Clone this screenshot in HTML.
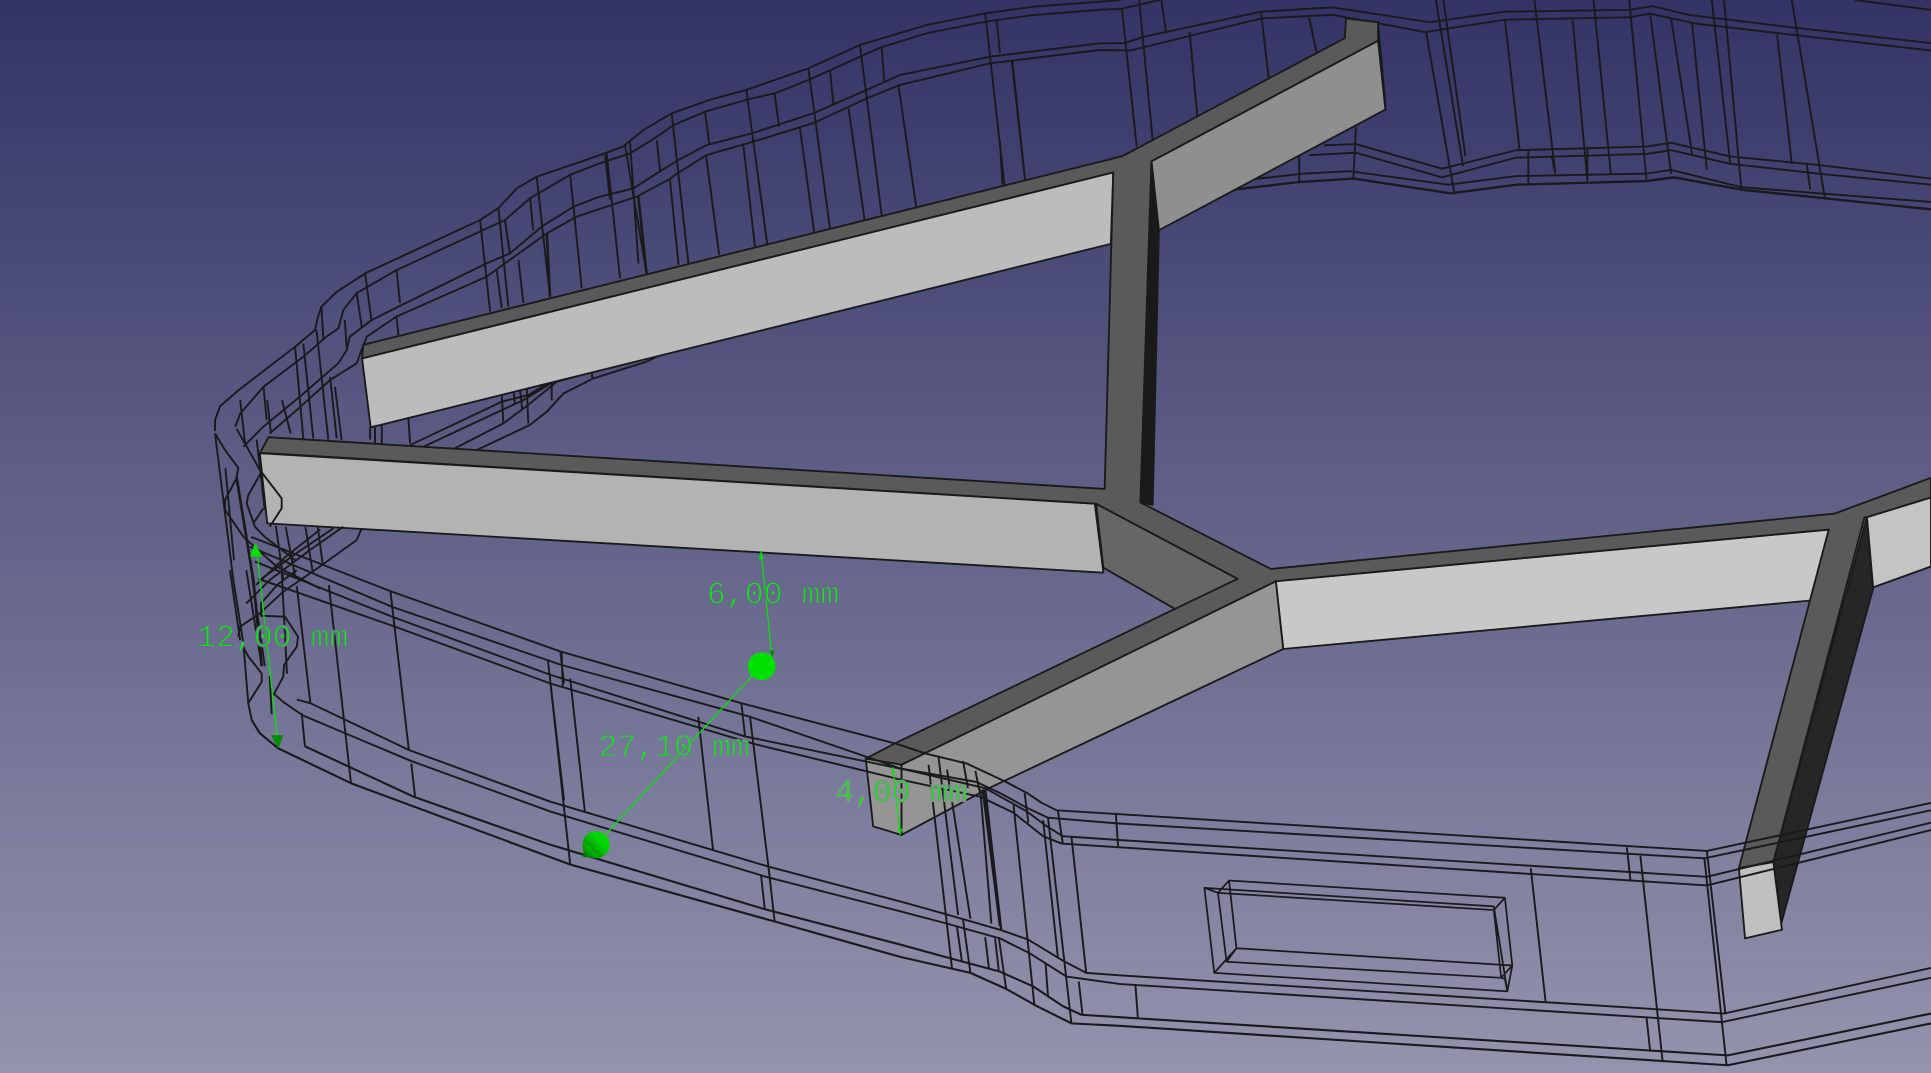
<!DOCTYPE html>
<html><head><meta charset="utf-8"><title>FreeCAD view</title>
<style>html,body{margin:0;padding:0;width:1931px;height:1073px;overflow:hidden;background:#555}svg{display:block}
text{font-family:"Liberation Mono",monospace;font-size:25.6px;fill:#00f400;stroke-width:.95px}</style></head>
<body>
<svg xmlns="http://www.w3.org/2000/svg" width="1931" height="1073" viewBox="0 0 1568 871.3">
<defs><linearGradient id="bg" x1="0" y1="0" x2="0" y2="1"><stop offset="0" stop-color="#333366"/><stop offset="1" stop-color="#9494ae"/></linearGradient>
<linearGradient id="s2" x1="0" y1="1" x2="1" y2="0"><stop offset=".05" stop-color="#006a00"/><stop offset=".6" stop-color="#00d000"/><stop offset="1" stop-color="#00e800"/></linearGradient></defs>
<rect width="1568" height="871.3" fill="url(#bg)"/>

<g fill="none" stroke="#1a1a1c" stroke-width="1.55" stroke-linejoin="round">
<!-- rear rim -->
<polyline points="174.6,350 174.6,341 178.6,330 193.5,317 239.6,281.6 255.8,268 258,258 261,249 273.4,237 296.4,222 389.8,178.7 404.7,169 419.6,153 435.8,143.5 487,126 506,119 522.4,105.6 545.4,92 576.5,81 606,73 656.4,55.5 698.3,36.5 752.5,20.3 800,10.8 839,5.4 893,1.4 910,0"/>
<polyline points="190.8,346.5 192,344 195,336 214,314 246.3,289.7 265,273.4 274.7,266.7 278.8,251.8 289.6,238 322,219.3 389.8,188 410,178.7 430.4,161 462.9,142 487,132.6 511.6,124.5 532,112 547,101.5 572.5,90.7 606,81 629,75.8 656.4,65 674,57 698.3,46 717,37.9 752.5,27 800,17.6 839,12.2 893,8 911,7 942,0"/>
<polyline points="197.6,362.8 213.8,346.5 243.6,322 274.7,295 281.5,284.3 284,273.4 301.8,259.9 323.5,249 395,213.9 414,205.8 439.9,184 465.6,167.9 487,159.7 514.3,153 533.2,140.8 550.8,130 573.8,117.8 610.4,108.3 660.4,92 703.8,73 730.8,60.9 803.9,46 893,35.2 913,35 928,30 1024,9.5 1082,6 1161,18 1222,9.5 1323,8 1342,5 1371,12 1453,22 1568,35"/>
<polyline points="219,352 240.9,333 268,308.6 289.6,295 293.7,284 297.8,273.4 322,257 395,224.7 444,189.5 468,176 517,159.7 542.7,146 552.2,139.4 573.8,125.9 611.7,115 660.4,100 703.8,79.9 730.8,69 803.9,51.4 893,40.6 918,41 1024,15 1082,12 1157,26 1222,16 1323,14 1340,11 1376,19 1453,28 1568,41"/>
<polyline points="1506,0 1568,8"/>
<polyline points="1075,118 1101,117 1171,137 1231,122 1337,119 1357,116 1405,127 1477,134 1568,145"/>
<polyline points="1063,126 1101,124 1171,144 1231,128 1337,125 1357,122 1405,133 1477,141 1568,150"/>
<polyline points="1014,146 1058,141 1096,139 1176,150 1231,143 1337,141 1357,138 1414,152 1477,157 1568,164"/>
<polyline points="1002,154 1053,148 1099,145 1178,157 1231,150 1337,147 1359,144 1414,154 1568,170" stroke-width="1.9"/>
<!-- rear verticals -->
<path d="M1158 26L1181 157M1166 0L1188 135M1172 0L1190 127M1222 16L1234 122M1246 0L1263 141M1277 16L1289 147M1294 0L1308 141M1323 0L1337 146M1340 12L1357 141M1357 15L1374 125M1374 19L1386 138M1390 0L1405 133M1400 0L1414 154M1443 28L1455 133M1455 0L1482 162M1467 133L1470 154M911 7L923 119M925 0L936 114M966 26L973 103M1024 10L1031 70M1063 14L1070 47M943 0L947 27M822 49L832 143M812 114L814 150M1101 103L1099 145M1055 127L1055 148M1241 122L1241 149M1289 120L1289 147M1260 127L1263 141"/>
<path d="M214 314L216.5 341M239.6 281.6L246.3 356M246.3 279L254.4 356M257 268L266.6 357M268 306L273.4 356M272 314L277.4 357.4M261 249L262.6 276M280 260L281.5 281.6M289.6 238L293.7 265M296.4 222L301.8 261M322 219L324.8 246M322 257L323.5 272M389.8 178.7L398 253M404.7 169L412.8 249M403.3 219L407.4 250M410 178.7L414 205.8M421 211L425 246M430.4 161L433 187M435.8 143.5L446.6 241M463 142L472.4 234M492.6 124.5L503.5 226M507.5 117.8L525 222M511.6 115L518.4 214M533.3 113.7L536 139.4M544 146L551 215M491.3 126L495.3 162M545.4 92L559 214M572.5 90.7L576 117.8M573.3 125.9L584 207M606 73L623 198M603.6 117.8L613 200M629 75.8L632.6 103M649.6 104L661 188M656.4 55.5L674 186M674 57L676.7 85M689 88L702 178M698.3 36.5L716 175M716 39L718 66M729.5 69L744 168M800 10.8L815.6 150M809.3 16L812 43M821.5 48.7L832.3 146"/>
<path d="M444 189L446.6 241M518.4 160L525 222" stroke-width="2.1"/>
<!-- rear lower, between arms -->
<polyline points="541.4,285.6 525,293.7 481.8,307.3 457.5,319.5 444,334.3 430.4,345 387,365.5"/>
<polyline points="527.9,289.7 481.8,301.9 452,310 430.4,327.6 408.7,343.8 369.5,364"/>
<polyline points="449.3,310 425,324.9 407.4,333 343.8,362.8"/>
<polyline points="446.6,310 429,320.8 407.4,326.2 333,361.4"/>
<path d="M300.5 346.5L300.5 357M304.5 347L304.5 361M310 345L310 360M331.6 339.7L333 360M407.4 319L408.7 344M417 315L418 328M422 314L424 332M427.7 314L429 344M448 311L448 325M480.5 302L481 307"/>
</g>

<!-- solids -->
<g stroke="#1a1a1a" stroke-width="1.5" stroke-linejoin="round">
<polygon points="935,131 1119,33 1125,89 941,187" fill="#8f8f8f"/>
<polygon points="1119,18 1125,85 1119,33" fill="#1a1a1a"/>
<polygon points="294,291 904,140 902,198 301,347" fill="#bcbcbc"/>
<polygon points="935,131 941,187 936,410 926,408" fill="#1a1a1a"/>
<polygon points="211,368 889,409 896,465 217,425" fill="#b3b3b3"/>
<polygon points="1036,472 1485,430 1477,487 1042,527" fill="#c8c8c8"/>
<polygon points="732,621 1036,472 1042,527 803,640 732,678" fill="#959595"/>
<polygon points="703,616 732,621 732,678 709,671" fill="#959595"/>
<polygon points="890,409 1005,470 955,495 896,461" fill="#666"/>
<polygon points="294,291 295,280 911,127 1092,31 1093,15 1119,18 1119,33 935,131 926,408 1032,462 1490,417 1568,388 1568,404 1516,420 1514,420 1440,700 1412,705 1485,430 1036,472 732,621 703,616 728,603 1005,470 890,409 217,368 211,368 218,355 897,397 904,140" fill="#5a5a5a"/>
<polygon points="1516,420 1521,478 1445,755 1440,700" fill="#262626"/>
<polygon points="1412,705 1440,700 1447,755 1417,762" fill="#c0c0c0"/>
<polygon points="1516,420 1568,404 1568,460 1521,477" fill="#c4c4c4"/>
</g>

<g fill="none" stroke="#1a1a1c" stroke-width="1.55" stroke-linejoin="round">
<!-- front top band -->
<polyline points="204,436 317,480 455,529 602,571 728,604 752,612 785,620 817,635 834,644 846,652 858,658 907,661 1386,691 1568,652"/>
<polyline points="203,444 319,493 456,540 609,582 731,624 793,635 812,644 834,656 851,664 907,668.6 1384,697 1568,658"/>
<polyline points="207,456 319,501 447,548 605,598 740,626 800,640 834,659 850,671 863,679 907,682 1386,712 1568,668"/>
<polyline points="210,470 321,509 447,555 612,604 731,633 796,647 823,660 847,679 862,685 909,688 1386,719 1568,674"/>
<!-- front lower band -->
<polyline points="241,568 252,571 332,609 447,651 625,704 731,732 767,742 812,755 835,763 863,780 882,790 909,792 1400,823 1568,786"/>
<polyline points="222,563 230,570 246,581 334,618 447,659 622,712 731,740 769,750 812,762 836,774 866,793 909,799 1398,830 1568,794"/>
<polyline points="247.6,606 336,647 447,686 620,738 731,767 771,778 812,789 839,801 863,817 878,824 909,826 1403,857 1568,823" stroke-width="1.7"/>
<polyline points="204.4,584.7 211,595.5 226,607.7 285,636 463,702 628,748 731,777 788,790 817,803 842,817 870,831 909,833 1403,865 1568,831" stroke-width="1.7"/>
<!-- front verticals -->
<path d="M317 480L332 609M245 579L247.6 606M267 475L285 636M334 620L337 647M445 537L458 650M456 530L457 557M463 551L475 660M447 555L463 702M567 582L579 690M455 529L458 555M602 571L605 598M609 582L625 712M618 711L621 738M624 704L629 748M754 621L773 786M762 614L778 743M769 625L788 746M777 752L781 780M782 747L788 790M782 618L786 640M792 626L796 645M796 641L805 750M800 761L803 786M808 762L811 788M811 761L817 803M823 654L840 817M832 644L835 668M847 666L859 777M851 664L870 831M859 658L863 685M870 679L882 790M849 782L851 809M876 797L879 824M906 660L908 688M922 800L924 827M1243 705L1255 813M1321 688L1324 715M1332 695L1350 861M1337 826L1340 854M1384 697L1402 865M1386 691L1401 823"/>
<path d="M798 641L812 752M800 641L813 755" stroke-width="1.9"/>
<!-- corner wires -->
<path d="M174.6 352L182.7 365.4L193.5 380L192 388.4L182.7 406L182.7 414L197.6 435.8L224.6 460L260 478"/>
<path d="M192 348L211 381.6L228.7 404.7L228.7 412.8L219 427.7"/>
<path d="M212.5 383L201.6 402L200.3 408.7L207 427.7L215 436L240 455"/>
<path d="M213.8 412.8L205.7 425"/>
<path d="M174.6 352L189.5 471L197.6 522.5L201.6 571"/>
<path d="M186.7 463L195 520M183 380L190 455"/>
<path d="M192 387L205.7 471L212.5 541" stroke-width="2.2"/>
<path d="M200 463L212.5 541M204 463L215 541"/>
<path d="M208.4 357L215 414M195 324.8L199 360M229 325L236 352M217 325L220 352"/>
<path d="M293.7 429L289.6 438.5L259.8 460L230 480.5L211 498L194.9 509L193.5 517"/>
<path d="M278.8 427.7L251.7 446.6L219 471L200 490"/>
<path d="M270.7 429L241 449L211 471"/>
<path d="M260 430L232 452L208 475"/>
<path d="M241 463L225 475L212 490L212 500L231.4 500.8L242 517L241 525L230.6 540L230 549.5L222 564.4"/>
<path d="M196 522.5L201.6 533L212.5 547L212.5 553.6L201.6 571L204.4 584.7"/>
<path d="M219 549L220.6 580M228.7 463L233 547M241 476L252 571M224 427L230 470M232 428L240 470M248 428L254 465M258 428L262 458"/>
<!-- window -->
<path d="M978 721L986 790L1224 805L1222 795L1219 794L996 781L989 725L978 721L1213 736L1224 805M989 725L1213 739L1219 794M998 715L1004 770L1228 784L1222 729L998 715L989 725M986 790L1004 770M996 781L1004 770M1213 739L1222 729M1219 794L1228 784L1224 805" stroke-width="1.4"/>
</g>

<!-- dimension graphics -->
<g stroke="#00e800" stroke-width="1" fill="none">
<path d="M208 442L226 607M618 448L627 535M618 541L484 686M725 623L731 678"/>
</g>
<polygon points="207,441 203,452 213,452" fill="#00e000"/>
<polygon points="226,608 220,597 230,597" fill="#008a00"/>
<polygon points="618,447 616,454 620,454" fill="#00e000"/>
<polygon points="627,534 625,528 629,528" fill="#008a00"/>
<polygon points="725,623 724,628 727,628" fill="#00e000"/>
<polygon points="731,678 729,673 733,673" fill="#00e000"/>
<circle cx="618.5" cy="541" r="11.3" fill="#00e000"/>
<circle cx="484" cy="686" r="11" fill="url(#s2)"/>
<polygon points="473.7,696 473.5,683 487,696.5" fill="url(#s2)"/>
<text x="160" y="525" stroke="#6c6c90" style="stroke:#6c6c90">12,00 mm</text>
<text x="574" y="490" style="stroke:#69698e">6,00 mm</text>
<text x="486" y="614" style="stroke:#767698">27,10 mm</text>
<text x="678" y="651" style="stroke:#8a8a98">4,00 mm</text>
</svg>
</body></html>
